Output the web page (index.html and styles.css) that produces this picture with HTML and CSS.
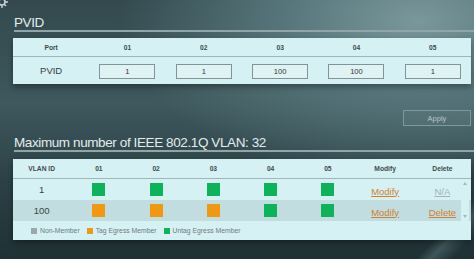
FILE: index.html
```html
<!DOCTYPE html>
<html>
<head>
    <meta charset='utf-8'>
    <title>VLAN Settings</title>
    <link rel="stylesheet" href="styles.css">
</head>
<body>
    <svg class="corner-icon" width="12" height="12" viewBox="0 0 12 12">
        <circle cx="6" cy="6" r="3" fill="none" stroke="#c9d3d5" stroke-width="1.6"/>
        <path d="M6 0v3M6 9v3M0 6h3M9 6h3M2 2l2 2M8 8l2 2M10 2l-2 2M2 10l2-2" stroke="#c9d3d5" stroke-width="1.4"/>
    </svg>

    <div class="page">
        <h2 class="section-title">PVID</h2>
        <div class="panel">
            <div class="pvid-row head">
                <div>Port</div>
                <div>01</div>
                <div>02</div>
                <div>03</div>
                <div>04</div>
                <div>05</div>
            </div>
            <div class="pvid-row data">
                <div class="label">PVID</div>
                <div><input class="pvid-input" value="1"></div>
                <div><input class="pvid-input" value="1"></div>
                <div><input class="pvid-input" value="100"></div>
                <div><input class="pvid-input" value="100"></div>
                <div><input class="pvid-input" value="1"></div>
            </div>
        </div>

        <div class="actions">
            <button id="applyBtn">Apply</button>
        </div>

        <h2 class="section-title title-vlan">Maximum number of IEEE 802.1Q VLAN: 32</h2>
        <div class="panel">
            <div class="vlan-row head">
                <div>VLAN ID</div>
                <div>01</div>
                <div>02</div>
                <div>03</div>
                <div>04</div>
                <div>05</div>
                <div>Modify</div>
                <div>Delete</div>
            </div>
            <div class="vlan-body">
                <div class="vlan-row">
                    <div class="vid">1</div>
                    <div><span class="sq untag"></span></div>
                    <div><span class="sq untag"></span></div>
                    <div><span class="sq untag"></span></div>
                    <div><span class="sq untag"></span></div>
                    <div><span class="sq untag"></span></div>
                    <div><a href="#" class="link">Modify</a></div>
                    <div><a href="#" class="link off">N/A</a></div>
                </div>
                <div class="vlan-row alt">
                    <div class="vid">100</div>
                    <div><span class="sq tag"></span></div>
                    <div><span class="sq tag"></span></div>
                    <div><span class="sq tag"></span></div>
                    <div><span class="sq untag"></span></div>
                    <div><span class="sq untag"></span></div>
                    <div><a href="#" class="link">Modify</a></div>
                    <div><a href="#" class="link">Delete</a></div>
                </div>
                <div class="scrollbar">
                    <span class="arrow up"></span>
                    <span class="arrow down"></span>
                </div>
            </div>
            <div class="legend">
                <span class="key"><span class="mini none"></span>Non-Member</span>
                <span class="key"><span class="mini tag"></span>Tag Egress Member</span>
                <span class="key"><span class="mini untag"></span>Untag Egress Member</span>
            </div>
        </div>
    </div>
</body>
</html>
```

FILE: styles.css
```css
/* Page */
body {
    margin: 0;
    height: 259px;
    overflow: hidden;
    font-family: "Liberation Sans", Arial, sans-serif;
    background:
        linear-gradient(135deg, transparent 92%, rgba(120, 150, 155, 0.35) 94%, transparent 97%),
        radial-gradient(ellipse 300px 160px at 88% 8%, #7a989c 0%, #56757a 45%, rgba(70, 100, 105, 0) 100%),
        linear-gradient(180deg, #33494e 0%, #3e585d 40%, #2c4146 70%, #1f3135 100%);
}

.corner-icon {
    position: absolute;
    left: -4px;
    top: -4px;
}

.page {
    padding: 15px 3px 0 13px;
}

.section-title {
    margin: 0 -3px 0 1px;
    font-size: 13.5px;
    line-height: 15px;
    font-weight: normal;
    letter-spacing: -0.4px;
    color: #e4ecee;
    border-bottom: 2px solid #8fa5a8;
}

.title-vlan {
    margin-top: 9px;
}

/* Panels */
.panel {
    margin-top: 6px;
    background: #d6f1f4;
    box-shadow: 0 3px 6px rgba(0, 0, 0, 0.35);
}

.title-vlan + .panel {
    margin-top: 7px;
}

.head {
    font-size: 6.7px;
    font-weight: bold;
    color: #3d4b4d;
    border-bottom: 1px solid #9db6b9;
}

/* PVID table */
.pvid-row {
    display: grid;
    grid-template-columns: repeat(6, 1fr);
    align-items: center;
    text-align: center;
}

.pvid-row.head {
    height: 18px;
}

.pvid-row.data {
    height: 27px;
}

.label {
    font-size: 9.5px;
    color: #34403f;
}

.pvid-input {
    width: 56px;
    height: 15px;
    box-sizing: border-box;
    border: 1px solid #7f9597;
    background: #dff3f5;
    font-family: "Liberation Sans", Arial, sans-serif;
    font-size: 7.6px;
    color: #333;
    text-align: center;
    padding: 0;
    display: block;
    margin: 1px auto 0;
}

/* Apply */
.actions {
    display: flex;
    justify-content: flex-end;
    margin-top: 26px;
}

#applyBtn {
    width: 68px;
    height: 16px;
    border: 1px solid #7e999d;
    background: rgba(255, 255, 255, 0.04);
    color: #b6c7c9;
    font-family: "Liberation Sans", Arial, sans-serif;
    font-size: 7.5px;
    padding: 0;
}

/* VLAN table */
.vlan-row {
    display: grid;
    grid-template-columns: repeat(8, 1fr);
    align-items: center;
    text-align: center;
    height: 21px;
}

.vlan-row.head {
    height: 19px;
}

.vlan-body {
    position: relative;
}

.vlan-row.alt {
    background: #c1dde0;
}

.vid {
    font-size: 9.5px;
    font-weight: normal;
    color: #3a4546;
}

.sq {
    display: block;
    width: 13px;
    height: 13px;
    margin: 0 auto;
}

.untag {
    background: #0cb35b;
}

.tag {
    background: #f09812;
}

.none {
    background: #9aa8ab;
}

.link {
    font-size: 9.5px;
    color: #d2802f;
}

.link.off {
    color: #9fb2b6;
}

.scrollbar {
    position: absolute;
    right: 2px;
    top: 0;
    bottom: 0;
    width: 8px;
    background: #d6f1f4;
}

.arrow {
    position: absolute;
    left: 2px;
    width: 0;
    height: 0;
    border-left: 2px solid transparent;
    border-right: 2px solid transparent;
}

.arrow.up {
    top: 3px;
    border-bottom: 3px solid #a9b6b8;
}

.arrow.down {
    bottom: 3px;
    border-top: 3px solid #a9b6b8;
}

/* Legend */
.legend {
    height: 19px;
    display: flex;
    align-items: center;
    gap: 7px;
    padding-left: 18px;
    font-size: 6.8px;
    color: #6b7b7e;
}

.key {
    display: flex;
    align-items: center;
}

.mini {
    display: inline-block;
    width: 6px;
    height: 6px;
    margin-right: 3px;
}
```
